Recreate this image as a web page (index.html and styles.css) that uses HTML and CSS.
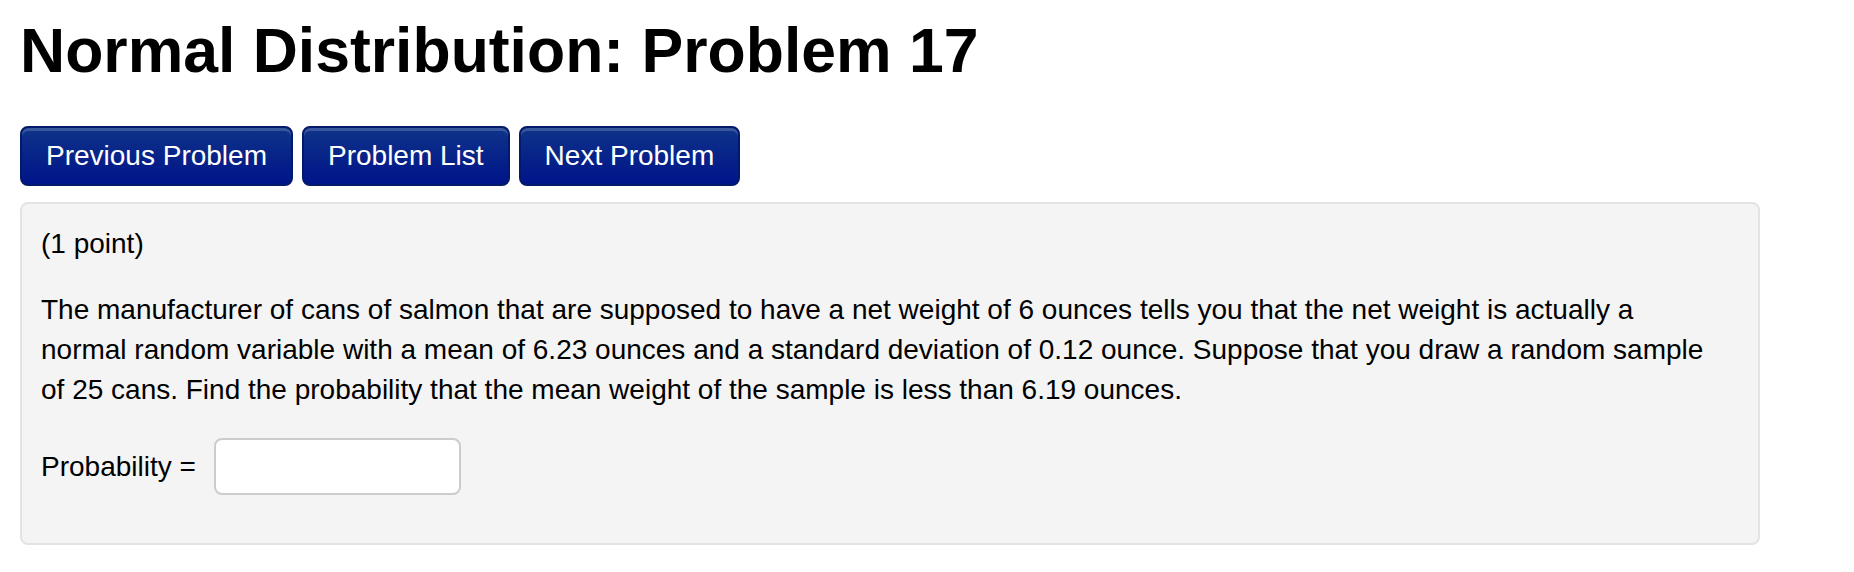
FILE: index.html
```html
<!DOCTYPE html>
<html lang="en">
<head>
<meta charset="utf-8">
<title>Normal Distribution: Problem 17</title>
<link rel="stylesheet" href="styles.css">
</head>
<body>
<main class="page">
  <h1 class="title">Normal Distribution: Problem 17</h1>
  <nav class="nav">
    <a class="btn" href="#">Previous Problem</a>
    <a class="btn" href="#">Problem List</a>
    <a class="btn" href="#">Next Problem</a>
  </nav>
  <section class="problem">
    <p class="points">(1 point)</p>
    <p class="text">The manufacturer of cans of salmon that are supposed to have a net weight of 6 ounces tells you that the net weight is actually a normal random variable with a mean of 6.23 ounces and a standard deviation of 0.12 ounce. Suppose that you draw a random sample of 25 cans. Find the probability that the mean weight of the sample is less than 6.19 ounces.</p>
    <div class="answer">
      <label class="answer-label" for="ans">Probability =</label>
      <input class="answer-input" id="ans" type="text">
    </div>
  </section>
</main>
</body>
</html>
```

FILE: styles.css
```css
html, body {
  margin: 0;
  padding: 0;
  background: #ffffff;
}

body {
  font-family: "Liberation Sans", Arial, Helvetica, sans-serif;
  color: #000;
  font-size: 28px;
  line-height: 40px;
}

.page {
  padding: 10px 0 0 20px;
  width: 1740px;
}

.title {
  margin: 0;
  font-size: 62.5px;
  line-height: 80px;
  font-weight: bold;
  letter-spacing: 0;
}

.nav {
  display: flex;
  gap: 9px;
  margin-top: 36px;
}

.btn {
  display: block;
  box-sizing: border-box;
  height: 60px;
  padding: 8px 24px;
  font-size: 28px;
  line-height: 40px;
  color: #fff;
  text-decoration: none;
  border: 2px solid #021a6a;
  border-radius: 8px;
  background: linear-gradient(to bottom, #0e3388 0%, #00148a 100%);
  box-shadow: inset 0 3px 0 rgba(255, 255, 255, 0.18);
}

.problem {
  margin-top: 16px;
  box-sizing: border-box;
  height: 343px;
  padding: 20px 38px 0 19px;
  background: #f4f4f4;
  border: 2px solid #e3e3e3;
  border-radius: 8px;
}

.points {
  margin: 0;
}

.text {
  margin: 26px 0 0 0;
}

.answer {
  display: flex;
  align-items: center;
  gap: 18px;
  margin-top: 28px;
}

.answer-input {
  box-sizing: border-box;
  width: 247px;
  height: 57px;
  background: #fff;
  border: 2px solid #cccccc;
  border-radius: 8px;
  font-size: 28px;
  padding: 0 10px;
  margin: 0;
}
```
